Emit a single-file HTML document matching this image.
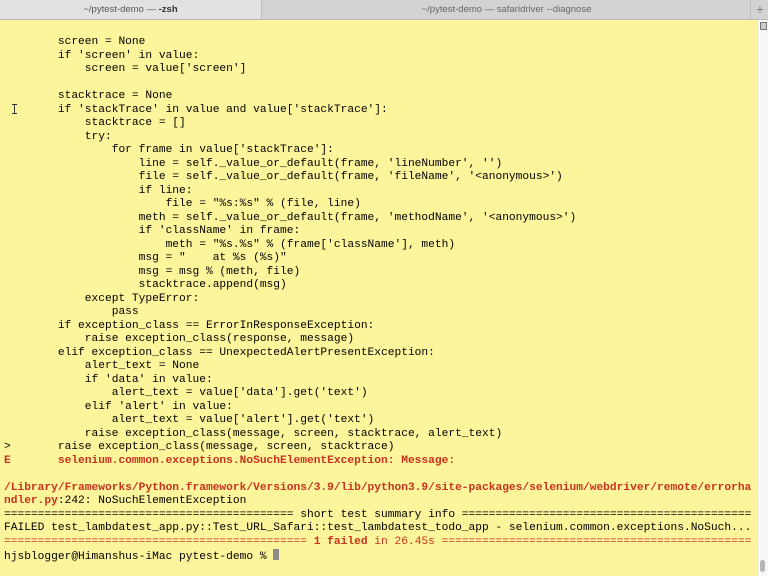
<!DOCTYPE html>
<html><head><meta charset="utf-8"><style>
html,body{margin:0;padding:0;width:768px;height:576px;overflow:hidden;background:#fdf59c;}
.tabs{position:absolute;left:0;top:0;width:768px;height:19px;background:#d3d3d3;border-bottom:1px solid #b8b8b8;font-family:"Liberation Sans",sans-serif;font-size:9.5px;color:#555;}
.t1{position:absolute;left:0;top:0;width:261px;height:19px;background:#e2e2e2;text-align:center;line-height:19px;}
.t2{position:absolute;left:261px;top:0;width:489px;height:19px;text-align:center;line-height:19px;color:#666;border-left:1px solid #bdbdbd;}
.plus{position:absolute;left:750px;top:0;width:18px;height:19px;border-left:1px solid #bdbdbd;text-align:center;line-height:18px;font-size:14px;color:#888;}
.sb{position:absolute;left:757px;top:20px;width:11px;height:556px;background:#f7f7f7;border-left:1px solid #e4e4e4;}
.sbi{position:absolute;left:760px;top:560px;width:5px;height:12px;background:#b5b5b5;border-radius:3px;}
.sbt{position:absolute;left:760px;top:22px;width:5px;height:6px;border:1px solid #777;background:#ccc;}
pre{position:absolute;left:4px;top:36px;margin:0;font-family:"Liberation Mono",monospace;font-size:11.23px;line-height:13.5px;color:#000;}
.r{color:#c8321f;}
.b{font-weight:bold;}
.cur{display:inline-block;width:6px;height:11px;background:#8c8c8c;vertical-align:-1px;}
.ib{position:absolute;left:14px;top:104px;width:1px;height:10px;background:#333;}
.ib:before,.ib:after{content:"";position:absolute;left:-2px;width:5px;height:1px;background:#333;}
.ib:before{top:0}.ib:after{bottom:0}
</style></head><body>
<div class="tabs"><div class="t1">~/pytest-demo — <b style="color:#333">-zsh</b></div><div class="t2">~/pytest-demo — safaridriver --diagnose</div><div class="plus">+</div></div>
<div class="sb"></div><div class="sbt"></div><div class="sbi"></div>
<div class="ib"></div>
<pre>        screen = None
        if 'screen' in value:
            screen = value['screen']

        stacktrace = None
        if 'stackTrace' in value and value['stackTrace']:
            stacktrace = []
            try:
                for frame in value['stackTrace']:
                    line = self._value_or_default(frame, 'lineNumber', '')
                    file = self._value_or_default(frame, 'fileName', '&lt;anonymous&gt;')
                    if line:
                        file = "%s:%s" % (file, line)
                    meth = self._value_or_default(frame, 'methodName', '&lt;anonymous&gt;')
                    if 'className' in frame:
                        meth = "%s.%s" % (frame['className'], meth)
                    msg = "    at %s (%s)"
                    msg = msg % (meth, file)
                    stacktrace.append(msg)
            except TypeError:
                pass
        if exception_class == ErrorInResponseException:
            raise exception_class(response, message)
        elif exception_class == UnexpectedAlertPresentException:
            alert_text = None
            if 'data' in value:
                alert_text = value['data'].get('text')
            elif 'alert' in value:
                alert_text = value['alert'].get('text')
            raise exception_class(message, screen, stacktrace, alert_text)
&gt;       raise exception_class(message, screen, stacktrace)
<span class="r b">E       selenium.common.exceptions.NoSuchElementException: Message:</span>

<span class="r b">/Library/Frameworks/Python.framework/Versions/3.9/lib/python3.9/site-packages/selenium/webdriver/remote/errorha
ndler.py</span>:242: NoSuchElementException
=========================================== short test summary info ===========================================
FAILED test_lambdatest_app.py::Test_URL_Safari::test_lambdatest_todo_app - selenium.common.exceptions.NoSuch...
<span class="r">============================================= <b>1 failed</b> in 26.45s ==============================================</span>
hjsblogger@Himanshus-iMac pytest-demo % <span class="cur"></span></pre>
</body></html>
